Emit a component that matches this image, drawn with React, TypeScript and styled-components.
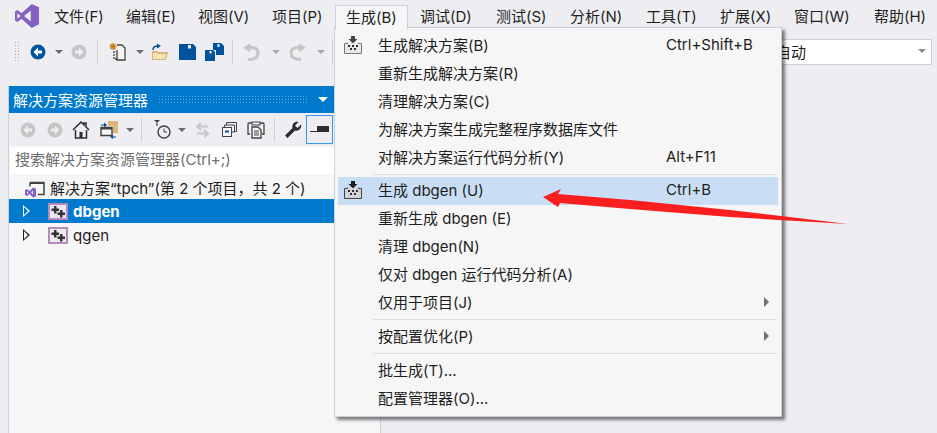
import styled, { createGlobalStyle } from 'styled-components';

const GlobalStyle = createGlobalStyle`
  html, body {
    margin: 0;
    padding: 0;
    height: 100%;
    background: #eeeef2;
  }
  body {
    font-family: Inter, "Noto Sans CJK SC", sans-serif;
    font-size: 15px;
    color: #1e1e1e;
  }
`;

const Page = styled.div`
  position: relative;
  width: 937px;
  height: 433px;
  overflow: hidden;
  background: #eeeef2;
`;

const MenuBar = styled.div`
  display: flex;
  align-items: flex-start;
  height: 34px;
  padding-left: 15px;
`;

const Logo = styled.svg`
  width: 24px;
  height: 24px;
  margin-top: 4px;
  margin-right: 3px;
  flex: none;
`;

const MenuItem = styled.div<{ $w: number; $active?: boolean }>`
  position: relative;
  z-index: ${(p) => (p.$active ? 3 : 0)};
  box-sizing: border-box;
  width: ${(p) => p.$w}px;
  height: ${(p) => (p.$active ? 24 : 28)}px;
  margin-top: 5px;
  padding-left: ${(p) => (p.$active ? 10 : 12)}px;
  line-height: 23px;
  white-space: nowrap;
  background: ${(p) => (p.$active ? '#f6f6f6' : 'transparent')};
  border: ${(p) => (p.$active ? '1px solid #cccedb' : 'none')};
  border-bottom: none;
`;

const Toolbar = styled.div`
  display: flex;
  align-items: center;
  height: 28px;
  margin-top: 4px;
  padding-left: 14px;
`;

const Grip = styled.div`
  width: 6px;
  height: 22px;
  background-image: radial-gradient(#a9a9b0 0.8px, transparent 0.9px);
  background-size: 3px 3px;
`;

const Tool = styled.span<{ $w: number; $ml?: number }>`
  display: flex;
  align-items: center;
  justify-content: center;
  flex: none;
  width: ${(p) => p.$w}px;
  margin-left: ${(p) => p.$ml ?? 0}px;
`;

const Caret = styled.i<{ $color?: string; $ml?: number; $size?: number }>`
  display: block;
  flex: none;
  width: 0;
  height: 0;
  margin-left: ${(p) => p.$ml ?? 0}px;
  border-left: ${(p) => p.$size ?? 4}px solid transparent;
  border-right: ${(p) => p.$size ?? 4}px solid transparent;
  border-top: ${(p) => p.$size ?? 4}px solid ${(p) => p.$color ?? '#6d6d70'};
`;

const ToolSep = styled.i<{ $ml: number }>`
  display: block;
  flex: none;
  width: 1px;
  height: 24px;
  margin-left: ${(p) => p.$ml}px;
  background: #cfcfd6;
`;

const Combo = styled.div`
  display: flex;
  align-items: center;
  justify-content: space-between;
  box-sizing: border-box;
  width: 200px;
  height: 26px;
  margin-left: auto;
  margin-right: 5px;
  padding: 0 5px 2px 43px;
  background: #fff;
  border: 1px solid #cccedb;
`;

const Panel = styled.div`
  width: 371px;
  height: 347px;
  margin-top: 20px;
  margin-left: 9px;
  background: #f6f6f6;
  box-shadow: -1px 0 0 #cccedb, 1px 0 0 #cccedb;
`;

const PanelHeader = styled.div`
  display: flex;
  align-items: center;
  height: 27px;
  padding-left: 4px;
  padding-bottom: 1px;
  box-sizing: border-box;
  background: #007acc;
  color: #fff;
`;

const Dots = styled.div`
  width: 149px;
  height: 8px;
  margin-left: 10px;
  background-image: radial-gradient(#59a8de 0.8px, transparent 0.9px);
  background-size: 3px 3px;
`;

const PanelTools = styled.div`
  display: flex;
  align-items: center;
  height: 33px;
  padding-left: 10px;
  background: #eeeef2;
`;

const PinButton = styled.span`
  display: flex;
  align-items: center;
  justify-content: center;
  box-sizing: border-box;
  flex: none;
  width: 27px;
  height: 29px;
  margin-left: 4px;
  border: 1px solid #3399ff;
`;

const SearchBox = styled.div`
  box-sizing: border-box;
  height: 27px;
  margin-top: 1px;
  margin-left: 1px;
  padding-left: 5px;
  line-height: 26px;
  background: #fff;
  color: #6d6d6d;
  white-space: nowrap;
`;

const Tree = styled.div`
  padding-top: 1px;
`;

const TreeRow = styled.div<{ $selected?: boolean; $indent: number }>`
  display: flex;
  align-items: center;
  height: 24px;
  padding-left: ${(p) => p.$indent}px;
  white-space: nowrap;
  background: ${(p) => (p.$selected ? '#007acc' : 'transparent')};
  color: ${(p) => (p.$selected ? '#fff' : '#1e1e1e')};
  font-weight: ${(p) => (p.$selected ? 700 : 400)};
`;

const Expander = styled.i<{ $color: string }>`
  display: block;
  flex: none;
  box-sizing: border-box;
  width: 0;
  height: 0;
  margin-right: 18px;
  border-left: 7px solid ${(p) => p.$color};
  border-top: 6px solid transparent;
  border-bottom: 6px solid transparent;
  position: relative;
  &::after {
    content: '';
    position: absolute;
    left: -6px;
    top: -4px;
    border-left: 4px solid ${(p) => (p.$color === '#fff' ? '#007acc' : '#f6f6f6')};
    border-top: 4px solid transparent;
    border-bottom: 4px solid transparent;
  }
`;

const TreeLabel = styled.span<{ $ml: number }>`
  margin-left: ${(p) => p.$ml}px;
`;

const Dropdown = styled.div`
  position: absolute;
  z-index: 2;
  left: 334px;
  top: 27px;
  box-sizing: border-box;
  width: 448px;
  height: 390px;
  padding: 4px 3px 0;
  background: #f6f6f6;
  border: 1px solid #cccedb;
  box-shadow: 3px 3px 3px rgba(0, 0, 0, 0.5);
`;

const Row = styled.div<{ $highlight?: boolean }>`
  position: relative;
  display: flex;
  align-items: center;
  width: 440px;
  height: 28px;
  padding-left: 40px;
  padding-bottom: 3px;
  box-sizing: border-box;
  white-space: nowrap;
  background: ${(p) => (p.$highlight ? '#c9def5' : 'transparent')};
`;

const RowIcon = styled.svg`
  position: absolute;
  left: 6px;
  top: 4px;
  width: 18px;
  height: 18px;
`;

const RowLabel = styled.span`
  width: 288px;
  flex: none;
`;

const SubArrow = styled.i`
  display: block;
  margin-left: auto;
  margin-right: 9px;
  width: 0;
  height: 0;
  border-left: 5px solid #717171;
  border-top: 5px solid transparent;
  border-bottom: 5px solid transparent;
`;

const Divider = styled.div<{ $h: number }>`
  display: flex;
  align-items: center;
  box-sizing: border-box;
  height: ${(p) => p.$h}px;
  padding-left: 35px;
  padding-bottom: ${(p) => p.$h - 4}px;
  &::after {
    content: '';
    display: block;
    width: 404px;
    height: 1px;
    background: #e0e0e4;
  }
`;

const RedArrow = styled.svg`
  position: absolute;
  z-index: 4;
  left: 0;
  top: 0;
  width: 937px;
  height: 433px;
  pointer-events: none;
`;

const menus = [
  { label: '文件(F)', w: 72 },
  { label: '编辑(E)', w: 72 },
  { label: '视图(V)', w: 74 },
  { label: '项目(P)', w: 75 },
  { label: '生成(B)', w: 73, active: true },
  { label: '调试(D)', w: 76 },
  { label: '测试(S)', w: 74 },
  { label: '分析(N)', w: 76 },
  { label: '工具(T)', w: 74 },
  { label: '扩展(X)', w: 74 },
  { label: '窗口(W)', w: 80 },
  { label: '帮助(H)', w: 60 },
];

const BuildIcon = ({ dark }: { dark?: boolean }) => (
  <RowIcon viewBox="0 0 18 18">
    <path d="M7 0h4v3h2.500L9 7.500 4.500 3H7z" fill={dark ? '#1e1e1e' : '#424242'} />
    <path d="M.5 7.500h3v-1M14.500 6.500v1h3v10H.500v-10" fill={dark ? '#d4d4d8' : '#e6e6e6'} stroke={dark ? '#424242' : '#77777c'} />
    <path d="M4 9h2v2H4zM8 9h2v2H8zM12 9h2v2h-2zM6 12h2v2H6zM10 12h2v2h-2z" fill="#2d2d30" />
  </RowIcon>
);

const CircleArrow = ({ color, flip }: { color: string; flip?: boolean }) => (
  <svg width="16" height="16" viewBox="0 0 16 16">
    <circle cx="8" cy="8" r="7.500" fill={color} />
    <path
      d={flip ? 'M8 3.500 12.500 8 8 12.500v-3H4v-3h4z' : 'M8 3.500 3.500 8 8 12.500v-3h4v-3H8z'}
      fill={color === '#00539c' ? '#fff' : '#eeeef2'}
    />
  </svg>
);

const ProjectIcon = ({ selected }: { selected?: boolean }) => (
  <svg width="20" height="17" viewBox="0 0 20 17" style={{ flex: 'none' }}>
    <rect x="1" y="1" width="18" height="15" fill={selected ? '#ece6ef' : '#ececec'} stroke="#b68cbd" strokeWidth="2" />
    <path d="M6 3h2.500v2.500H11V8H8.500v2.500H6V8H3.500V5.500H6zM12 7h2.500v2.500H17V12h-2.500v2.500H12V12H9.500V9.500H12z" fill="#333337" />
  </svg>
);

export default function App() {
  return (
    <Page>
      <GlobalStyle />
      <MenuBar>
        <Logo viewBox="0 0 24 24">
          <path
            fillRule="evenodd"
            d="M16.700 0 24 3.300v17L16.700 24 6.500 14.700 2.500 18 0 16.500v-9L2.500 6l4 3.300zM15.700 6.700 9 12l6.700 5.300zM2.300 9.300v5.400L5.700 12z"
            fill="#8661c5"
          />
        </Logo>
        {menus.map((m) => (
          <MenuItem key={m.label} $w={m.w} $active={m.active}>
            {m.label}
          </MenuItem>
        ))}
      </MenuBar>

      <Toolbar>
        <Grip />
        <Tool $w={16} $ml={10}>
          <CircleArrow color="#00539c" />
        </Tool>
        <Caret $ml={9} />
        <Tool $w={16} $ml={8}>
          <CircleArrow color="#c6c6c6" flip />
        </Tool>
        <ToolSep $ml={10} />
        <Tool $w={20} $ml={10}>
          <svg width="19" height="20" viewBox="0 0 19 20">
            <path d="M4 1v7M.5 4.500h7M1.500 2l5 5M6.500 2l-5 5" stroke="#c27d1a" strokeWidth="1.300" />
            <path d="M8 3h5l3 3v12H8V8" fill="#f6f6f6" stroke="#424242" strokeWidth="1.300" />
            <path d="M5 9v8h3" fill="none" stroke="#424242" strokeWidth="1.300" strokeDasharray="2 1" />
          </svg>
        </Tool>
        <Caret $ml={8} />
        <Tool $w={18} $ml={7}>
          <svg width="18" height="18" viewBox="0 0 18 18">
            <path d="M1 8h5l1 1h10l-2 8H1z" fill="#dcb67a" />
            <path d="M2 10h4l1 1h8l-1 5H2z" fill="#f5dfb4" />
            <path d="M2 7c0-3 2-4 5-4" fill="none" stroke="#00539c" strokeWidth="1.600" />
            <path d="M6 .5 10 3 6 5.500z" fill="#00539c" />
          </svg>
        </Tool>
        <Tool $w={17} $ml={10}>
          <svg width="17" height="16" viewBox="0 0 17 16">
            <path d="M0 0h14l3 3v13H0z" fill="#00539c" />
            <path d="M9 1h3v3.500H9z" fill="#eeeef2" />
          </svg>
        </Tool>
        <Tool $w={19} $ml={9}>
          <svg width="19" height="18" viewBox="0 0 19 18">
            <path d="M8 0h8l3 3v9h-8V7H8z" fill="#00539c" />
            <path d="M12.500 1h2v3h-2z" fill="#eeeef2" />
            <path d="M0 7h8l2 2v9H0z" fill="#00539c" />
            <path d="M4.500 8h2v2.500h-2z" fill="#eeeef2" />
          </svg>
        </Tool>
        <ToolSep $ml={8} />
        <Tool $w={17} $ml={10}>
          <svg width="17" height="17" viewBox="0 0 17 17">
            <path d="M5 15.500c6 0 10-2 10-6.500S11 3.500 8 3.500H3" fill="none" stroke="#c6c6c6" strokeWidth="3" />
            <path d="M7 .5 2.500 3.500 7 7" fill="none" stroke="#c6c6c6" strokeWidth="2.500" />
          </svg>
        </Tool>
        <Caret $color="#a8a8a8" $ml={12} />
        <Tool $w={17} $ml={9}>
          <svg width="17" height="17" viewBox="0 0 17 17">
            <path d="M12 15.500C6 15.500 2 13.500 2 9s4-5.500 7-5.500h5" fill="none" stroke="#c6c6c6" strokeWidth="3" />
            <path d="M10 .5l4.500 3L10 7" fill="none" stroke="#c6c6c6" strokeWidth="2.500" />
          </svg>
        </Tool>
        <Caret $color="#a8a8a8" $ml={11} />
        <ToolSep $ml={7} />
        <Combo>
          <span>自动</span>
          <Caret $color="#8a8a8a" />
        </Combo>
      </Toolbar>

      <Panel>
        <PanelHeader>
          <span>解决方案资源管理器</span>
          <Dots />
          <Caret $color="#fff" $ml={11} $size={5} />
        </PanelHeader>

        <PanelTools>
          <Tool $w={16} $ml={1}>
            <CircleArrow color="#c6c6c6" />
          </Tool>
          <Tool $w={16} $ml={11}>
            <CircleArrow color="#c6c6c6" flip />
          </Tool>
          <Tool $w={18} $ml={9}>
            <svg width="18" height="18" viewBox="0 0 18 18">
              <path d="M1 9 9 1l3 3V2h2v4l3 3" fill="none" stroke="#2d2d30" strokeWidth="1.500" />
              <path d="M3.500 9v8h11V9" fill="none" stroke="#2d2d30" strokeWidth="1.500" />
              <path d="M7.500 11h3v6h-3z" fill="#2d2d30" />
            </svg>
          </Tool>
          <Tool $w={18} $ml={10}>
            <svg width="18" height="18" viewBox="0 0 18 18">
              <path d="M8 0h10v12h-5V5H8z" fill="#dcb67a" />
              <path d="M1 6.500h11v8H1z" fill="#f6f6f6" stroke="#424242" strokeWidth="1.400" />
              <path d="M1 6h11v2.500H1z" fill="#424242" />
              <path d="M1 3.500h3V1.500l3 2.500L4 6.500v-2H1zM16 15.500h-3v-2l-3 2.500 3 2v-1.500h3z" fill="#00539c" />
            </svg>
          </Tool>
          <Caret $ml={8} />
          <ToolSep $ml={7} />
          <Tool $w={18} $ml={11}>
            <svg width="18" height="20" viewBox="0 0 18 20">
              <path d="M1 0h6L4 3z" fill="#424242" />
              <path d="M4 3v3" stroke="#424242" strokeWidth="1.200" />
              <circle cx="11" cy="12" r="6" fill="none" stroke="#424242" strokeWidth="1.400" />
              <path d="M11 8.500V12h3" fill="none" stroke="#424242" />
            </svg>
          </Tool>
          <Caret $ml={7} />
          <Tool $w={15} $ml={9}>
            <svg width="15" height="16" viewBox="0 0 15 16">
              <path d="M6 1 2 4.500 6 8M2 4.500h11M9 8l4 3.500L9 15M13 11.500H2" fill="none" stroke="#c6c6c6" strokeWidth="2" />
            </svg>
          </Tool>
          <Tool $w={15} $ml={12}>
            <svg width="15" height="15" viewBox="0 0 15 15">
              <path d="M4.500 3V.5h10v9H12M2.500 5V3h10v7H10" fill="none" stroke="#424242" />
              <rect x=".5" y="5.500" width="9" height="9" fill="#f6f6f6" stroke="#424242" />
              <path d="M3 9.500h4" stroke="#00539c" strokeWidth="2" />
            </svg>
          </Tool>
          <Tool $w={18} $ml={10}>
            <svg width="18" height="18" viewBox="0 0 18 18">
              <path d="M3 13H1V3q0-1 1-1h3M13 2h3q1 0 1 1v10h-2" fill="none" stroke="#424242" strokeWidth="1.300" />
              <rect x="5" y="1" width="8" height="3" fill="#eeeef2" stroke="#424242" />
              <path d="M5 6h6l3 3v8H5z" fill="#f6f6f6" stroke="#424242" strokeWidth="1.300" />
              <path d="M7 10h5M7 12h5M7 14h5" stroke="#424242" />
            </svg>
          </Tool>
          <ToolSep $ml={9} />
          <Tool $w={18} $ml={9}>
            <svg width="18" height="18" viewBox="0 0 18 18">
              <path d="M17 3.500 13.500 7 11 4.500 14.500 1C11 0 7.500 3 8.500 7L1 14.500 3.500 17 11 9.500c4 1 7-2.500 6-6z" fill="#2d2d30" />
            </svg>
          </Tool>
          <PinButton>
            <svg width="19" height="8" viewBox="0 0 19 8">
              <path d="M7 0h12v6H7z" fill="#2d2d30" />
              <path d="M0 5h7v1H0z" fill="#2d2d30" />
            </svg>
          </PinButton>
        </PanelTools>

        <SearchBox>搜索解决方案资源管理器(Ctrl+;)</SearchBox>

        <Tree>
          <TreeRow $indent={16}>
            <svg width="20" height="22" viewBox="0 0 20 22" style={{ flex: 'none' }}>
              <path d="M5 6.500h14v12h-6M5 6.500v4" fill="none" stroke="#424242" strokeWidth="1.500" />
              <path d="M5 6h14v2H5z" fill="#424242" />
              <path
                fillRule="evenodd"
                d="M8 11.500l3 1.300v7.400L8 21.500 4.500 18 2 20l-2-1v-5l2-1 2.500 2zM8 14.500 6.200 16.500 8 18.500zM2 15v3l1.300-1.500z"
                fill="#8661c5"
              />
            </svg>
            <TreeLabel $ml={5}>解决方案“tpch”(第 2 个项目，共 2 个)</TreeLabel>
          </TreeRow>
          <TreeRow $indent={14} $selected>
            <Expander $color="#fff" />
            <ProjectIcon selected />
            <TreeLabel $ml={5}>dbgen</TreeLabel>
          </TreeRow>
          <TreeRow $indent={14}>
            <Expander $color="#1e1e1e" />
            <ProjectIcon />
            <TreeLabel $ml={5}>qgen</TreeLabel>
          </TreeRow>
        </Tree>
      </Panel>

      <Dropdown>
        <Row>
          <BuildIcon />
          <RowLabel>生成解决方案(B)</RowLabel>
          <span>Ctrl+Shift+B</span>
        </Row>
        <Row>
          <RowLabel>重新生成解决方案(R)</RowLabel>
        </Row>
        <Row>
          <RowLabel>清理解决方案(C)</RowLabel>
        </Row>
        <Row>
          <RowLabel>为解决方案生成完整程序数据库文件</RowLabel>
        </Row>
        <Row>
          <RowLabel>对解决方案运行代码分析(Y)</RowLabel>
          <span>Alt+F11</span>
        </Row>
        <Divider $h={5} />
        <Row $highlight>
          <BuildIcon dark />
          <RowLabel>生成 dbgen (U)</RowLabel>
          <span>Ctrl+B</span>
        </Row>
        <Row>
          <RowLabel>重新生成 dbgen (E)</RowLabel>
        </Row>
        <Row>
          <RowLabel>清理 dbgen(N)</RowLabel>
        </Row>
        <Row>
          <RowLabel>仅对 dbgen 运行代码分析(A)</RowLabel>
        </Row>
        <Row>
          <RowLabel>仅用于项目(J)</RowLabel>
          <SubArrow />
        </Row>
        <Divider $h={6} />
        <Row>
          <RowLabel>按配置优化(P)</RowLabel>
          <SubArrow />
        </Row>
        <Divider $h={6} />
        <Row>
          <RowLabel>批生成(T)...</RowLabel>
        </Row>
        <Row>
          <RowLabel>配置管理器(O)...</RowLabel>
        </Row>
      </Dropdown>

      <RedArrow viewBox="0 0 937 433">
        <polygon
          points="543,197 561,189 558,194 630,200 730,210 848,224 730,217 630,209 560,203 558,207"
          fill="#fa1e1e"
        />
      </RedArrow>
    </Page>
  );
}
